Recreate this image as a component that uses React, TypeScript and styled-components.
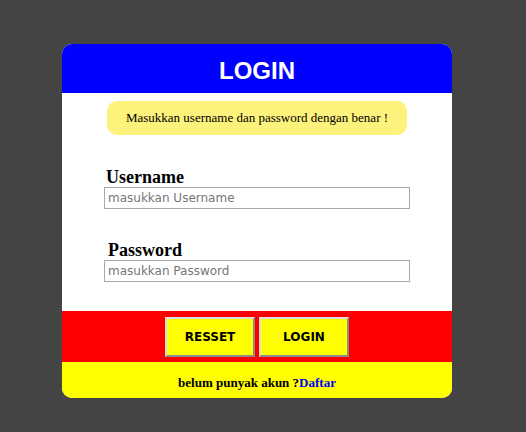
import React from 'react';
import styled, { createGlobalStyle } from 'styled-components';

const GlobalStyle = createGlobalStyle`
    html, body {
        margin: 0;
        padding: 0;
        background-color: #444444;
    }
`;

const Page = styled.div`
    min-height: 100vh;
    box-sizing: border-box;
    padding: 44px 0 0 62px;
    background-color: #444444;
`;

const Card = styled.div`
    width: 390px;
    border-radius: 10px;
    overflow: hidden;
    background-color: #ffffff;
    display: flex;
    flex-direction: column;
`;

const Header = styled.div`
    height: 49px;
    background-color: #0000ff;
    display: flex;
    justify-content: center;
    align-items: center;
`;

const Title = styled.h1`
    margin: 0;
    font-family: 'Liberation Sans', Arial, sans-serif;
    font-size: 24px;
    font-weight: 700;
    color: #ffffff;
    padding-top: 4px;
`;

const Body = styled.div`
    padding: 8px 0 29px;
    display: flex;
    flex-direction: column;
`;

const Notice = styled.div`
    width: 300px;
    height: 34px;
    margin: 0 auto 31px;
    border-radius: 10px;
    background-color: #fdf27b;
    font-family: 'Liberation Serif', 'Times New Roman', serif;
    font-size: 13px;
    line-height: 34px;
    text-align: center;
    color: #000000;
`;

const Fields = styled.div`
    display: flex;
    flex-direction: column;
    gap: 30px;
    padding-left: 42px;
`;

const Field = styled.div`
    display: flex;
    flex-direction: column;
`;

const Label = styled.label<{ $indent: number }>`
    font-family: 'Liberation Serif', 'Times New Roman', serif;
    font-size: 18px;
    font-weight: 700;
    line-height: 20px;
    height: 21px;
    display: flex;
    align-items: flex-end;
    color: #000000;
    padding-left: ${(p) => p.$indent}px;
`;

const Input = styled.input`
    width: 306px;
    height: 22px;
    box-sizing: border-box;
    margin: 0;
    padding: 0 3px;
    border: 1px solid #a9a9a9;
    font-family: 'DejaVu Sans', Verdana, sans-serif;
    font-size: 12px;
    color: #000000;
    outline: none;

    &::placeholder {
        color: #767676;
    }
`;

const ButtonBar = styled.div`
    height: 51px;
    background-color: #ff0000;
    display: flex;
    justify-content: center;
    align-items: center;
    gap: 4px;
    padding-top: 1px;
    box-sizing: border-box;
`;

const Button = styled.button`
    width: 90px;
    height: 40px;
    margin: 0;
    padding: 0;
    background-color: #ffff00;
    border-style: solid;
    border-width: 2px;
    border-color: #dcdcdc #8a8a8a #8a8a8a #dcdcdc;
    font-family: 'DejaVu Sans', Verdana, sans-serif;
    font-size: 12px;
    font-weight: 700;
    color: #000000;
    cursor: pointer;
`;

const Footer = styled.div`
    height: 36px;
    background-color: #ffff00;
    display: flex;
    justify-content: center;
    align-items: center;
    padding-top: 5px;
    box-sizing: border-box;
    font-family: 'Liberation Serif', 'Times New Roman', serif;
    font-size: 13px;
    font-weight: 700;
    color: #000000;
`;

const RegisterLink = styled.a`
    color: #0000ff;
    text-decoration: none;
`;

const App: React.FC = () => {
    return (
        <Page>
            <GlobalStyle />
            <Card>
                <Header>
                    <Title>LOGIN</Title>
                </Header>
                <Body>
                    <Notice>Masukkan username dan password dengan benar !</Notice>
                    <Fields>
                        <Field>
                            <Label $indent={2}>Username</Label>
                            <Input type="text" placeholder="masukkan Username" />
                        </Field>
                        <Field>
                            <Label $indent={4}>Password</Label>
                            <Input type="password" placeholder="masukkan Password" />
                        </Field>
                    </Fields>
                </Body>
                <ButtonBar>
                    <Button type="reset">RESSET</Button>
                    <Button type="submit">LOGIN</Button>
                </ButtonBar>
                <Footer>
                    belum punyak akun ?<RegisterLink href="#">Daftar</RegisterLink>
                </Footer>
            </Card>
        </Page>
    );
};

export default App;
